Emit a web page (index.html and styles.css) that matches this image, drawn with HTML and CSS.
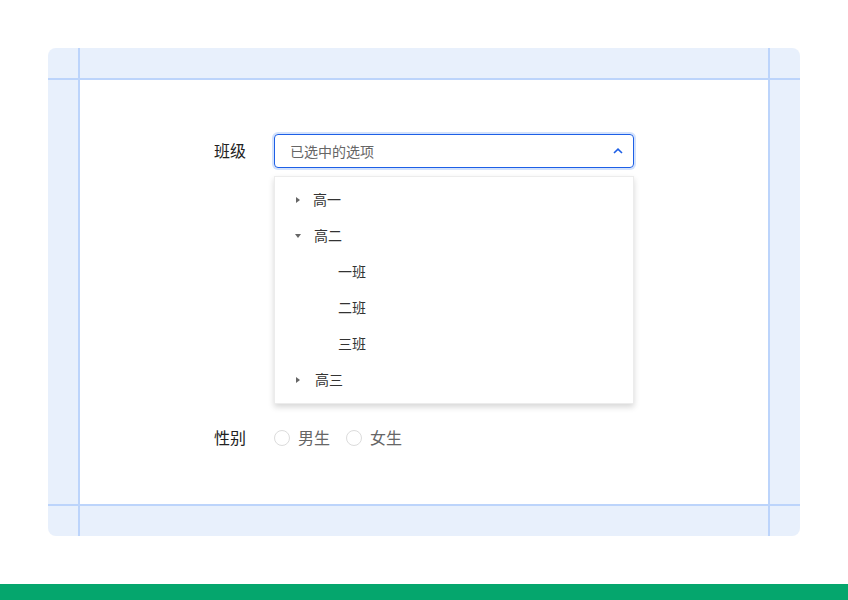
FILE: index.html
```html
<html lang="en">

<head>
    <meta charset="UTF-8">
    <meta name="viewport" content="width=device-width, initial-scale=1.0">
    <title>级联选择</title>
    <link rel="stylesheet" href="styles.css">
</head>

<body>
    <div class="stage">
        <div class="panel">
            <div class="content">
                <div class="form">
                    <div class="form-row">
                        <span class="form-label">班级</span>
                        <div class="field">
                            <div class="select is-open">
                                <span class="select-value">已选中的选项</span>
                                <svg class="select-arrow" width="10" height="6" viewBox="0 0 10 6">
                                    <path d="M1 5 L5 1.2 L9 5" fill="none" stroke="#1d5fe6" stroke-width="1.6" />
                                </svg>
                            </div>
                            <ul class="tree">
                                <li class="tree-node"><i class="caret caret-right"></i>高一</li>
                                <li class="tree-node"><i class="caret caret-down"></i>高二</li>
                                <li class="tree-node tree-leaf">一班</li>
                                <li class="tree-node tree-leaf">二班</li>
                                <li class="tree-node tree-leaf">三班</li>
                                <li class="tree-node tree-last"><i class="caret caret-right"></i>高三</li>
                            </ul>
                        </div>
                    </div>
                    <div class="form-row form-row-radio">
                        <span class="form-label">性别</span>
                        <div class="radio-group">
                            <label class="radio"><span class="radio-dot"></span>男生</label>
                            <label class="radio"><span class="radio-dot"></span>女生</label>
                        </div>
                    </div>
                </div>
            </div>
        </div>
    </div>
    <div class="footer-bar"></div>
</body>

</html>
```

FILE: styles.css
```css
body {
    margin: 0;
    padding: 0;
    background-color: #ffffff;
    font-family: "Noto Sans CJK SC", "Noto Sans", sans-serif;
    overflow: hidden;
}

.stage {
    height: 584px;
    padding: 48px;
    box-sizing: border-box;
}

.panel {
    height: 488px;
    padding: 32px;
    box-sizing: border-box;
    border-radius: 8px;
    background-color: #e8f0fc;
    background-image:
        linear-gradient(#bcd4fb, #bcd4fb),
        linear-gradient(#bcd4fb, #bcd4fb),
        linear-gradient(#bcd4fb, #bcd4fb),
        linear-gradient(#bcd4fb, #bcd4fb);
    background-repeat: no-repeat;
    background-size: 2px 100%, 2px 100%, 100% 2px, 100% 2px;
    background-position: 30px 0, 720px 0, 0 30px, 0 456px;
}

.content {
    height: 100%;
    background-color: #ffffff;
    display: flex;
    justify-content: center;
    padding-top: 54px;
    box-sizing: border-box;
}

.form {
    display: flex;
    flex-direction: column;
    gap: 23px;
}

.form-row {
    display: flex;
    align-items: flex-start;
}

.form-label {
    width: 60px;
    font-size: 16px;
    line-height: 33px;
    color: #222222;
}

.field {
    width: 360px;
    display: flex;
    flex-direction: column;
    gap: 8px;
}

.select {
    height: 34px;
    box-sizing: border-box;
    border: 1px solid #1d5fe6;
    border-radius: 4px;
    box-shadow: 0 0 0 2px #d3e2fc;
    display: flex;
    align-items: center;
    justify-content: space-between;
    padding: 0 10px 1px 15px;
}

.select-value {
    font-size: 14px;
    color: #666666;
}

.select-arrow {
    display: block;
}

.tree {
    list-style: none;
    margin: 0;
    padding: 4px 0 6px;
    background: #ffffff;
    border: 1px solid #ececec;
    box-shadow: 0 3px 6px rgba(0, 0, 0, 0.16);
}

.tree-node {
    height: 36px;
    display: flex;
    align-items: center;
    padding-left: 20px;
    font-size: 14px;
    color: #333333;
}

.tree-leaf {
    padding-left: 63px;
}

.tree-last .caret {
    margin-right: 15px;
}

.caret {
    width: 0;
    height: 0;
    margin-right: 13px;
    margin-top: 1px;
    border-style: solid;
    border-color: transparent;
}

.caret-right {
    margin-left: 1px;
    border-width: 3px 0 3px 4px;
    border-left-color: #666666;
}

.caret-down {
    border-width: 4px 3px 0 3px;
    border-top-color: #666666;
}

.form-row-radio .form-label {
    line-height: 20px;
}

.radio-group {
    display: flex;
    gap: 16px;
}

.radio {
    display: flex;
    align-items: center;
    font-size: 16px;
    line-height: 20px;
    color: #666666;
}

.radio-dot {
    width: 16px;
    height: 16px;
    box-sizing: border-box;
    border: 1px solid #dcdcdc;
    border-radius: 50%;
    margin-right: 8px;
    margin-top: 1px;
}

.footer-bar {
    height: 16px;
    background-color: #05a66d;
}
```
